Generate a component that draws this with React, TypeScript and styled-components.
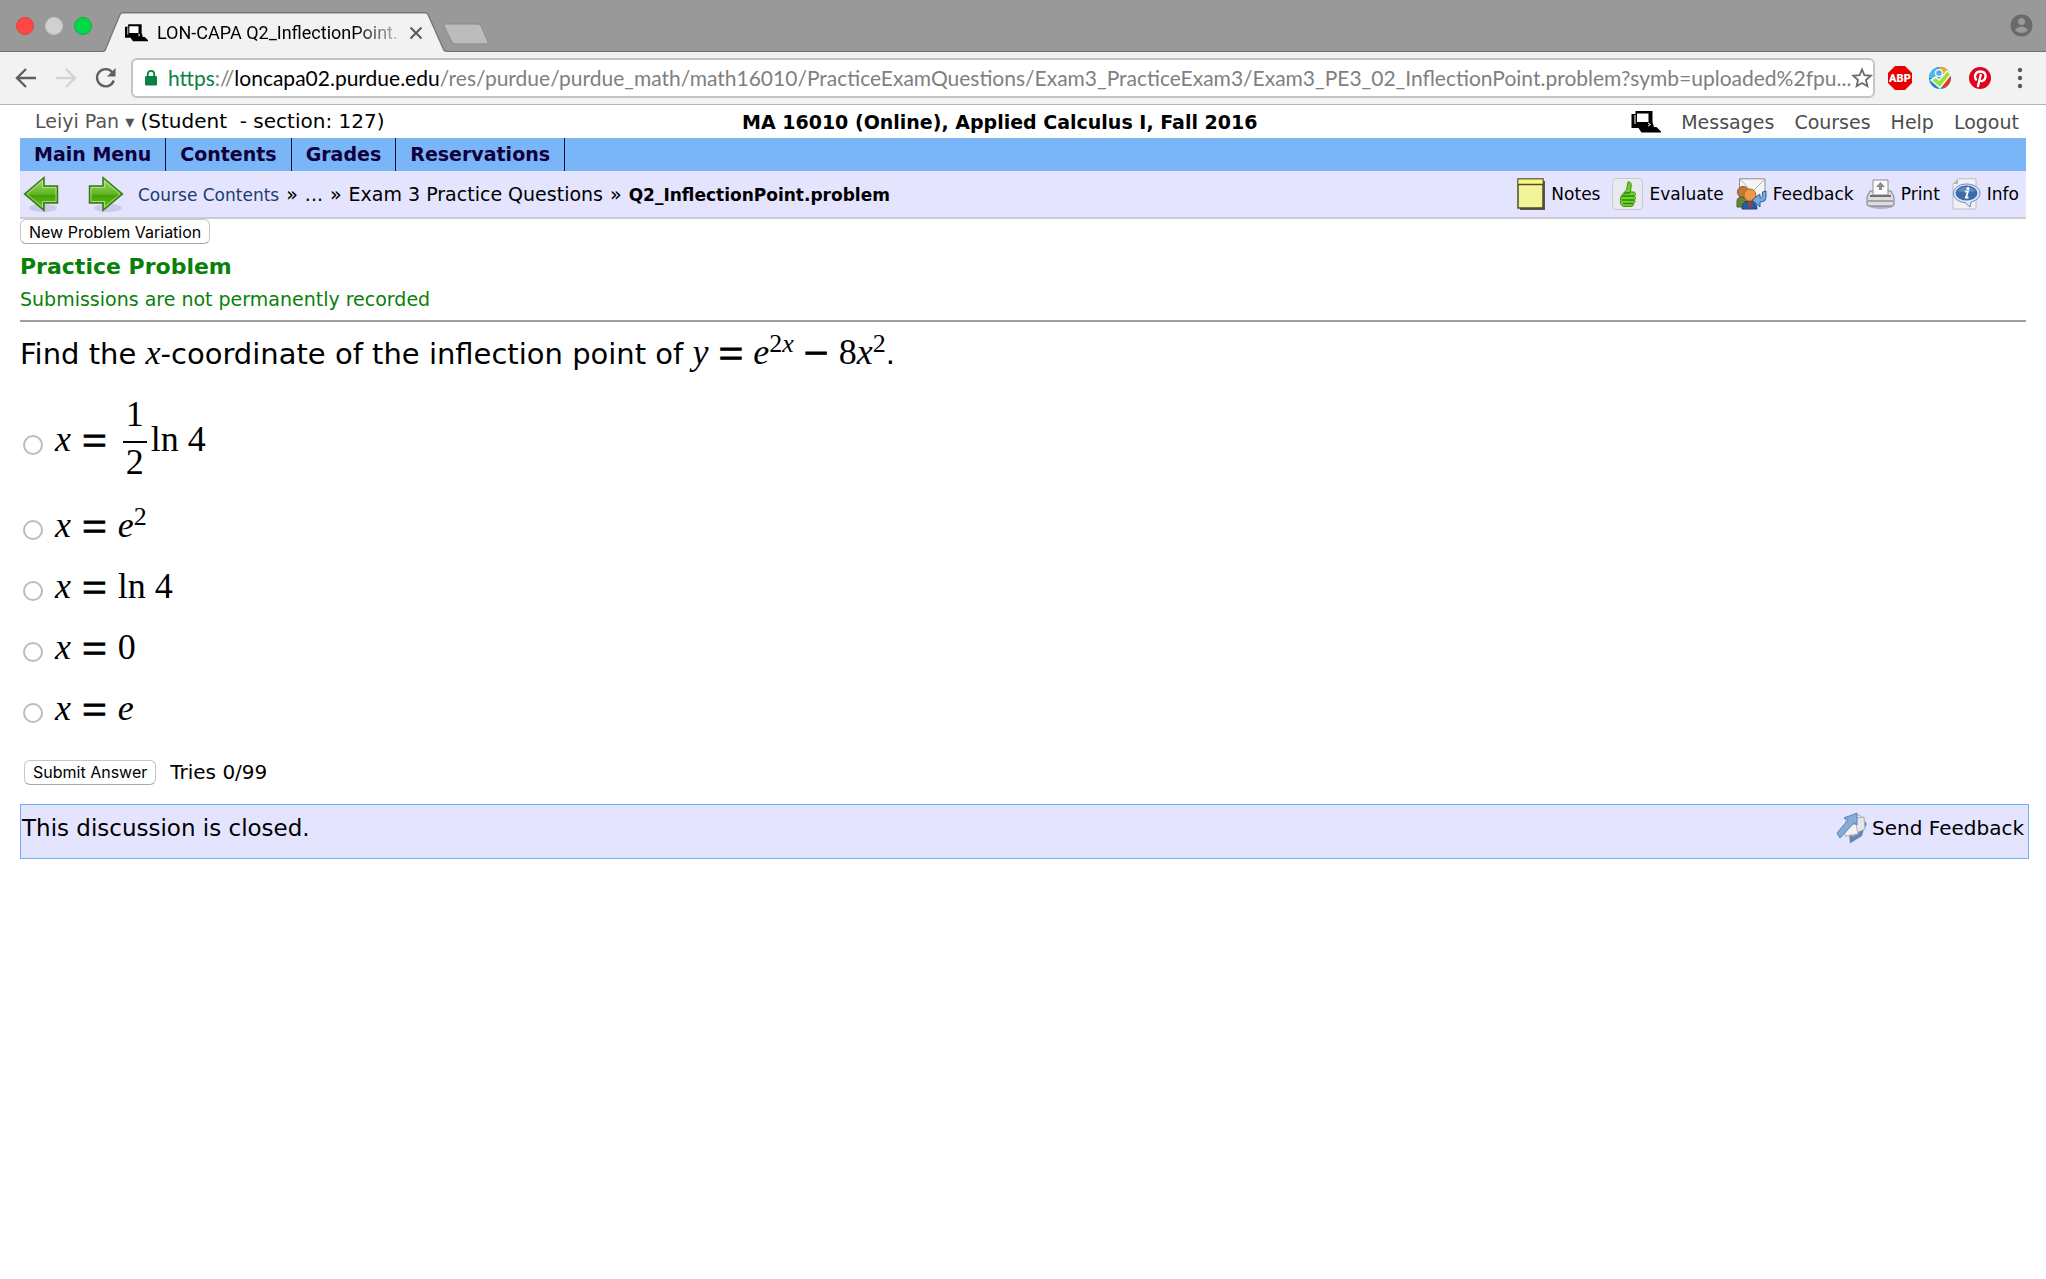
import React, { useState } from "react";
import styled, { createGlobalStyle } from "styled-components";

const GlobalStyle = createGlobalStyle`
  *, *::before, *::after { box-sizing: border-box; }
  body {
    margin: 0;
    background: #fff;
    color: #000;
    font-family: "DejaVu Sans", Verdana, sans-serif;
    font-size: 19px;
  }
  button { font: inherit; color: inherit; cursor: pointer; }
  svg { display: block; flex: none; }
`;

const uiFont = `Inter, Roboto, sans-serif`;

/* ---------- browser window ---------- */

const TabStrip = styled.div`
  display: flex;
  align-items: flex-end;
  height: 52px;
  padding: 0 13px 0 16px;
  background: #999;
  border-bottom: 1px solid #6f6f6f;
`;

const WindowButtons = styled.div`
  display: flex;
  align-self: center;
  gap: 11px;
  margin-right: 11px;
`;

const WindowButton = styled.button<{ $fill: string; $edge: string }>`
  width: 18px;
  height: 18px;
  padding: 0;
  border: 1px solid ${(p) => p.$edge};
  border-radius: 50%;
  background: ${(p) => p.$fill};
`;

const Tab = styled.div`
  position: relative;
  display: flex;
  align-items: center;
  width: 344px;
  height: 40px;
  margin-bottom: -1px;
  padding: 2px 24px 0 22px;
`;

const TabShape = styled.svg`
  position: absolute;
  inset: 0;
`;

const TabTitle = styled.span`
  position: relative;
  flex: 1;
  margin-left: 9px;
  font-family: Roboto, sans-serif;
  font-size: 18px;
  line-height: 24px;
  white-space: nowrap;
  mask-image: linear-gradient(90deg, #000 78%, transparent 100%);
`;

const Favicon = styled.span`
  position: relative;
`;

const BareButton = styled.button`
  position: relative;
  display: flex;
  align-items: center;
  justify-content: center;
  padding: 0;
  border: 0;
  background: none;
`;

const NewTabButton = styled(BareButton)`
  margin: 0 auto 6px -4px;
`;

const ProfileButton = styled(BareButton)`
  align-self: center;
`;

const Toolbar = styled.div`
  display: flex;
  align-items: center;
  height: 53px;
  padding: 0 14px 0 15px;
  background: #f2f2f2;
  border-bottom: 1px solid #b4b4b4;
`;

const NavButtons = styled.div`
  display: flex;
  gap: 18px;
  margin-right: 14px;
`;

const AddressBar = styled.div`
  display: flex;
  flex: 1;
  align-items: center;
  min-width: 0;
  height: 40px;
  padding: 0 8px 0 12px;
  border: 2px solid #c4c4c4;
  border-radius: 6px;
  background: #fff;
`;

const Address = styled.div`
  flex: 1;
  margin-left: 11px;
  color: #808080;
  font-family: Lato, sans-serif;
  font-size: 21px;
  line-height: 30px;
  white-space: nowrap;
`;

const Scheme = styled.span`
  color: #0b8043;
`;

const Host = styled.span`
  color: #000;
`;

const Extensions = styled.div`
  display: flex;
  align-items: center;
  gap: 16px;
  margin-left: 13px;
`;

/* ---------- page header ---------- */

const Page = styled.div`
  padding: 0 20px;
`;

const Header = styled.header`
  display: flex;
  align-items: center;
  height: 33px;
  padding: 0 7px 0 15px;
  line-height: 24px;
  white-space: nowrap;
`;

const UserInfo = styled.div`
  flex: 0 0 707px;
  font-size: 20px;
  white-space: pre;
`;

const UserMenu = styled.button`
  padding: 0;
  border: 0;
  background: none;
  color: #555;
  font-size: 19px;
`;

const Caret = styled.span`
  font-size: 18px;
`;

const CourseTitle = styled.strong`
  flex: 1;
`;

const HeaderLinks = styled.nav`
  display: flex;
  align-items: center;
  gap: 20px;
`;

const HeaderLink = styled.a`
  color: #4d4d4d;
  text-decoration: none;
`;

const MenuBar = styled.nav`
  display: flex;
  height: 33px;
  background: #79b5f7;
`;

const MenuLink = styled.a`
  padding: 0 14px;
  border-right: 1px solid #101030;
  color: #10003c;
  font-weight: 700;
  line-height: 32px;
  text-decoration: none;
`;

const LocationBar = styled.div`
  display: flex;
  align-items: center;
  justify-content: space-between;
  height: 48px;
  padding: 0 7px 0 3px;
  background: #e4e4ff;
  border-bottom: 2px solid #ccccd2;
  white-space: nowrap;
`;

const Row = styled.div<{ $gap: number }>`
  display: flex;
  align-items: center;
  gap: ${(p) => p.$gap}px;
`;

const Crumbs = styled.nav`
  display: flex;
  align-items: baseline;
  gap: 7px;
  line-height: 24px;
`;

const CrumbLink = styled.a<{ $small?: boolean }>`
  color: ${(p) => (p.$small ? "#1c3c6c" : "#000")};
  font-size: ${(p) => (p.$small ? 17 : 19)}px;
  text-decoration: none;
`;

const CurrentCrumb = styled.strong`
  font-size: 17px;
`;

const ToolLink = styled.a`
  display: flex;
  align-items: center;
  gap: 6px;
  color: #000;
  font-size: 17px;
  line-height: 24px;
  text-decoration: none;
`;

/* ---------- problem ---------- */

const PushButton = styled.button`
  height: 25px;
  padding: 0 8px;
  border: 1px solid #c6c6c6;
  border-bottom-color: #a8a8a8;
  border-radius: 6px;
  background: #fff;
  font-family: ${uiFont};
  font-size: 16px;
  line-height: 22px;
`;

const PracticeHeading = styled.h2`
  margin: 9px 0 0;
  color: #0a800a;
  font-size: 22px;
  line-height: 28px;
`;

const PracticeNote = styled.p`
  margin: 6px 0 0;
  color: #0a800a;
  line-height: 24px;
`;

const Rule = styled.hr`
  height: 2px;
  margin: 9px 0 0;
  border: 0;
  background: #a0a0a0;
`;

const Question = styled.p`
  margin: 8px 0 0;
  font-size: 29px;
  line-height: 48px;
`;

const MathText = styled.span`
  font-family: "Liberation Serif", "Times New Roman", serif;
  font-size: 36px;
  line-height: 1;
  white-space: nowrap;
`;

const Var = styled.i`
  font-family: "Liberation Serif", "Times New Roman", serif;
  font-size: 34px;
  line-height: 1;
`;

const Operator = styled.span`
  margin: 0 10px;
  font-size: 44px;
  line-height: 0;
  vertical-align: -4px;
  -webkit-text-stroke: 1px #000;
`;

const AnswerText = styled(MathText)<{ $tall?: boolean }>`
  padding-bottom: ${(p) => (p.$tall ? 4 : 10)}px;
  ${Operator} { margin: 0 11px; }
`;

const Sup = styled.sup`
  font-size: 26px;
  line-height: 0;
  vertical-align: 12px;
`;

const Fraction = styled.span`
  display: inline-flex;
  flex-direction: column;
  width: 24px;
  margin: 0 4px 0 5px;
  text-align: center;
  vertical-align: middle;
`;

const Numerator = styled.span`
  padding-bottom: 8px;
  border-bottom: 2px solid #000;
  line-height: 38px;
`;

const Denominator = styled.span`
  padding-bottom: 10px;
  line-height: 38px;
`;

const Options = styled.fieldset`
  margin: 13px 0 0;
  padding: 0;
  border: 0;
`;

const Option = styled.label<{ $tall?: boolean }>`
  display: flex;
  align-items: center;
  gap: 12px;
  height: ${(p) => (p.$tall ? 108 : 61)}px;
  padding-left: 3px;
`;

const Radio = styled.input`
  appearance: none;
  width: 20px;
  height: 20px;
  margin: 0;
  border: 2px solid #bcbcbc;
  border-radius: 50%;
  background: #fff;
  &:checked { background: radial-gradient(#333 0 4px, #fff 5px); }
`;

const SubmitRow = styled.div`
  display: flex;
  align-items: center;
  gap: 14px;
  padding: 15px 4px 18px;
  font-size: 20px;
  line-height: 28px;
`;

const Discussion = styled.section`
  display: flex;
  align-items: flex-start;
  justify-content: space-between;
  height: 55px;
  margin-right: -3px;
  padding: 7px 4px 0 1px;
  border: 1px solid #6fb0f4;
  background: #e4e4ff;
  font-size: 23px;
  line-height: 32px;
`;

const FeedbackLink = styled.a`
  display: flex;
  align-items: center;
  gap: 5px;
  color: #000;
  font-size: 20px;
  text-decoration: none;
`;

/* ---------- drawings ---------- */

const LonCapaLogo = ({ width, height }: { width: number; height: number }) => (
  <svg width={width} height={height} viewBox="0 0 29 22" aria-hidden="true">
    <path d="M0 3 H4 V0 H21 V11 L22.500 16 H25 L29.500 20.500 V21.500 H10 L7 17 H0 Z" fill="#000" />
    <path d="M5.500 2.500 H17 V11 H5.500 Z" fill="#fff" />
    <path d="M3.500 4 V13 M16.500 12 L19 13.500 L16.500 15.200" stroke="#fff" strokeWidth="1" fill="none" />
  </svg>
);

const NavArrow = ({ flip }: { flip?: boolean }) => (
  <svg width="36" height="38" viewBox="0 0 36 38" aria-hidden="true">
    <defs>
      <linearGradient id={flip ? "ag2" : "ag1"} x1="0" y1="0" x2="0" y2="1">
        <stop offset="0" stopColor="#a6dc6c" />
        <stop offset=".5" stopColor="#62b526" />
        <stop offset=".55" stopColor="#45a008" />
        <stop offset="1" stopColor="#6cc62c" />
      </linearGradient>
    </defs>
    <ellipse cx="20" cy="33" rx="14" ry="4" fill="#9a9ac0" opacity=".35" />
    <g transform={flip ? "translate(36 1) scale(-1 1)" : "translate(0 1)"}>
      <path d="M1.500 18 L21 1.500 V10 H34.500 V27 H21 V34.500 Z" fill={`url(#${flip ? "ag2" : "ag1"})`} stroke="#3c7a14" strokeWidth="1.500" />
      <path d="M4 18 L19.500 5 V11.500 H33 V25.500 H19.500 V31 Z" fill="none" stroke="#c4ecA0" strokeWidth="1" opacity=".7" />
    </g>
  </svg>
);

const NotesIcon = () => (
  <svg width="28" height="32" viewBox="0 0 28 32" aria-hidden="true">
    <path d="M3 3 H28 V32 H3 Z" fill="#555" />
    <path d="M1 1 H26 V30 H1 Z" fill="#f3f398" stroke="#4c4c30" strokeWidth="1.500" />
    <path d="M1.500 1.500 H25.500 V6 H1.500 Z" fill="#f8f87c" />
    <path d="M1 6.500 H26" stroke="#4c4c30" strokeWidth="1.500" />
  </svg>
);

const EvaluateIcon = () => (
  <svg width="31" height="32" viewBox="0 0 31 32" aria-hidden="true">
    <rect x=".5" y=".5" width="30" height="31" rx="4" fill="#e9e9ee" stroke="#c9c9d6" />
    <path d="M16 4 C19 3.500 19.500 6 19 9 L18.500 14 H21 C24 14 24 17 22.500 18 C24 20 23.500 21 22.500 22 C23.500 24 22.500 25 21.500 25.500 C22 28 20 28.500 17 28.500 H12 C9 28 8 25 8.500 21 C8.500 16 14.500 14 15 10 Z" fill="#6cd42a" stroke="#3c8c14" strokeWidth="1" />
    <path d="M12 15.500 L18 14.500 M10 18 H22 M10 22 H22 M11 25.500 H21" stroke="#2f8410" strokeWidth="1.300" />
  </svg>
);

const FeedbackIcon = () => (
  <svg width="31" height="32" viewBox="0 0 31 32" aria-hidden="true">
    <path d="M3.500 .8 H29 V23 H3.500 Z" fill="#f4f4f4" stroke="#8c8c8c" />
    <path d="M4 1 L16 14 L29 1" fill="none" stroke="#b4b4b4" />
    <circle cx="7" cy="14" r="5.500" fill="#c2783a" stroke="#8c5020" />
    <path d="M1 29 V23 Q1 19 7 19 L12 22 V29 Z" fill="#68803c" stroke="#4c6028" />
    <path d="M6 31 Q6 23 13 23 Q21 23 21 31 Z" fill="#2c5ca0" stroke="#1c4078" />
    <circle cx="14" cy="17" r="6" fill="#f09848" stroke="#bc6820" />
    <path d="M12 24 L14 31 L16 24 Z" fill="#d83020" />
    <path d="M30 13 V18 Q30 24 24 24 V29 L16 22 L24 16 V20 Q27 20 26.500 14 Z" fill="#78a8dc" stroke="#2c5c9c" />
  </svg>
);

const PrintIcon = () => (
  <svg width="29" height="30" viewBox="0 0 29 30" aria-hidden="true">
    <ellipse cx="15" cy="27" rx="12" ry="3" fill="#9090a8" opacity=".6" />
    <path d="M4 12 H25 L28 18 V25 Q28 27 26 27 H3 Q1 27 1 25 V18 Z" fill="#dcdcdc" stroke="#7c7c7c" />
    <path d="M7 1 H22 V16 H7 Z" fill="#fafafa" stroke="#8c8c8c" />
    <path d="M14.500 3 L19 8 H16 V11 H13 V8 H10 Z" fill="#8c8c8c" />
    <path d="M4 17 H25" stroke="#707070" strokeWidth="2" />
    <path d="M2 22 H27" stroke="#a4a4a4" strokeWidth="2" />
  </svg>
);

const InfoIcon = () => (
  <svg width="29" height="32" viewBox="0 0 29 32" aria-hidden="true">
    <path d="M6 .7 H24 V31 H1 V6 Z" fill="#f1f1f4" stroke="#bcbcc8" />
    <path d="M1 6 H6 V.7 Z" fill="#b8b8b8" />
    <path d="M14.500 6 C22 6 28 10 28 15.500 C28 20 23 23 19 24 L18 29 L13 24.500 C6 24 1.500 20 1.500 15.500 C1.500 10 7 6 14.500 6 Z" fill="#dce8f8" stroke="#6888b8" />
    <ellipse cx="14.500" cy="15" rx="11" ry="7.500" fill="#3c6cac" />
    <path d="M5 13 Q14 5 24 13 Q14 15 5 13 Z" fill="#7ca0d0" opacity=".6" />
    <circle cx="16" cy="10.500" r="1.500" fill="#fff" />
    <path d="M13 13.500 H16 L14 19.500 H16.500" fill="none" stroke="#fff" strokeWidth="1.800" />
  </svg>
);

const SendIcon = () => (
  <svg width="31" height="32" viewBox="0 0 31 32" aria-hidden="true">
    <path d="M9 5 L24 3 L28 13 L12 20 Z" fill="#eeeeee" stroke="#b0b4bc" />
    <path d="M28 8 L31 12 L28 17 L26 24 L14 31.500 L13 22 L18 24 Z" fill="#6488b4" />
    <path d="M19 6 L28 5 L29 17 L20 21 Z" fill="#e6e6e8" stroke="#a8acb4" />
    <path d="M9 14 L20 12 L22 22 L9 24 Z" fill="#f2f2f2" stroke="#b4b4b8" />
    <path d="M21 1 L21 13 L18 11 L4 26 L1 21 L12 8 L8 6 Z" fill="#84acd8" stroke="#5c84b4" />
  </svg>
);

const StarIcon = () => (
  <svg width="22" height="22" viewBox="0 0 22 22" aria-hidden="true">
    <path d="M11 2.500 L13.400 8.200 L19.800 8.800 L15 13 L16.400 19.200 L11 16 L5.600 19.200 L7 13 L2.200 8.800 L8.600 8.200 Z" fill="none" stroke="#6a6a6a" strokeWidth="1.800" />
  </svg>
);

const AbpIcon = () => (
  <svg width="24" height="24" viewBox="0 0 24 24" role="img" aria-label="Adblock Plus">
    <path d="M7 0 H17 L24 7 V17 L17 24 H7 L0 17 V7 Z" fill="#e60000" />
    <text x="12" y="16" textAnchor="middle" fontFamily="Roboto, sans-serif" fontSize="11" fontWeight="900" fill="#fff">ABP</text>
  </svg>
);

const MapIcon = () => (
  <svg width="24" height="24" viewBox="0 0 24 24" aria-hidden="true">
    <circle cx="12" cy="12" r="11" fill="#1880e0" />
    <path d="M1 12 A11 11 0 0 1 9 1.500 L8 12 Z" fill="#48b8f0" />
    <path d="M12 1 A11 11 0 0 1 21 6 L18 9 L10 4 Z" fill="#f8a818" />
    <path d="M20 5 A11 11 0 0 1 18 21 L14 22 L19 8 Z" fill="#f03810" />
    <circle cx="11" cy="7" r="3.500" fill="#58a8f0" stroke="#f0f8ff" strokeWidth="1.500" />
    <path d="M3 14 L8 11 L11 14 L19 5 L23 8 L12 22 Z" fill="#98e048" stroke="#f4ffe4" strokeWidth="1.500" />
  </svg>
);

const PinterestIcon = () => (
  <svg width="24" height="24" viewBox="0 0 24 24" aria-hidden="true">
    <circle cx="12" cy="12" r="11" fill="#e00020" />
    <path d="M8 13.500 C5.500 10 8 5.500 12.500 5.500 C17 5.500 18.500 9 17 12.500 C15.800 15.500 12.500 15.800 11.500 14 M12.700 9 L10 20" fill="none" stroke="#fff" strokeWidth="2.400" strokeLinecap="round" />
  </svg>
);

const MoreIcon = () => (
  <svg width="24" height="24" viewBox="0 0 24 24" aria-hidden="true">
    <circle cx="12" cy="4" r="2.200" fill="#5a5a5a" />
    <circle cx="12" cy="12" r="2.200" fill="#5a5a5a" />
    <circle cx="12" cy="20" r="2.200" fill="#5a5a5a" />
  </svg>
);

const LineArrow = ({ forward }: { forward?: boolean }) => (
  <svg width="22" height="22" viewBox="0 0 22 22" aria-hidden="true">
    <path
      d={forward ? "M1 11 H20 M11 2 L20 11 L11 20" : "M21 11 H2 M11 2 L2 11 L11 20"}
      fill="none"
      stroke={forward ? "#d4d4d4" : "#5f5f5f"}
      strokeWidth="2.400"
    />
  </svg>
);

const ReloadIcon = () => (
  <svg width="22" height="22" viewBox="0 0 22 22" aria-hidden="true">
    <path d="M18.800 13.500 A8.600 8.600 0 1 1 17.500 5.500" fill="none" stroke="#5f5f5f" strokeWidth="2.400" />
    <path d="M20.500 1 V9.500 H12 Z" fill="#5f5f5f" />
  </svg>
);

const LockIcon = () => (
  <svg width="12" height="18" viewBox="0 0 12 18" aria-hidden="true">
    <path d="M2.800 8 V5 A3.200 3.200 0 0 1 9.200 5 V8" fill="none" stroke="#0b8043" strokeWidth="1.800" />
    <rect x="0" y="7" width="12" height="9.500" rx="1" fill="#0b8043" />
  </svg>
);

/* ---------- data ---------- */

const Equals = () => <Operator>=</Operator>;

const answers: { id: string; tall?: boolean; value: React.ReactNode }[] = [
  {
    id: "half-ln-4",
    tall: true,
    value: (
      <>
        <Fraction>
          <Numerator>1</Numerator>
          <Denominator>2</Denominator>
        </Fraction>
        ln 4
      </>
    ),
  },
  { id: "e-squared", value: <><i>e</i><Sup>2</Sup></> },
  { id: "ln-4", value: "ln 4" },
  { id: "zero", value: "0" },
  { id: "e", value: <i>e</i> },
];

const tools = [
  { name: "Notes", icon: <NotesIcon /> },
  { name: "Evaluate", icon: <EvaluateIcon /> },
  { name: "Feedback", icon: <FeedbackIcon /> },
  { name: "Print", icon: <PrintIcon /> },
  { name: "Info", icon: <InfoIcon /> },
];

/* ---------- app ---------- */

const BrowserChrome = () => (
  <>
    <TabStrip>
      <WindowButtons>
        <WindowButton aria-label="Close window" $fill="#ff4844" $edge="#e0403c" />
        <WindowButton aria-label="Minimize window" $fill="#d0d0d0" $edge="#c4c4c4" />
        <WindowButton aria-label="Zoom window" $fill="#00d848" $edge="#10b040" />
      </WindowButtons>
      <Tab>
        <TabShape width="344" height="40" viewBox="0 0 344 40" aria-hidden="true">
          <path d="M0 40 L2 38.500 L17 2.500 Q18 .7 20 .7 H322 Q324 .7 325 2.500 L341 38.500 L344 40 Z" fill="#f2f2f2" />
          <path d="M0 39.500 L2 38.500 L17 2.500 Q18 .7 20 .7 H322 Q324 .7 325 2.500 L341 38.500 L344 39.500" fill="none" stroke="#777" strokeWidth="1.400" />
        </TabShape>
        <Favicon><LonCapaLogo width={23} height={18} /></Favicon>
        <TabTitle>LON-CAPA Q2_InflectionPoint.</TabTitle>
        <BareButton aria-label="Close tab">
          <svg width="14" height="14" viewBox="0 0 14 14" aria-hidden="true">
            <path d="M1.500 1.500 L12.500 12.500 M12.500 1.500 L1.500 12.500" stroke="#5a5a5a" strokeWidth="2" />
          </svg>
        </BareButton>
      </Tab>
      <NewTabButton aria-label="New tab">
        <svg width="46" height="22" viewBox="0 0 46 22" aria-hidden="true">
          <path d="M2 1 H35 Q37 1 38 3 L45 19 Q45.500 21 44 21 H12 Q10 21 9 19 L1 3 Q.5 1 2 1 Z" fill="#bcbcbc" stroke="#8a8a8a" />
        </svg>
      </NewTabButton>
      <ProfileButton aria-label="Profile">
        <svg width="23" height="23" viewBox="0 0 23 23" aria-hidden="true">
          <circle cx="11.500" cy="11.500" r="11" fill="#6a6a6a" />
          <circle cx="11.500" cy="7.500" r="3.500" fill="#999" />
          <path d="M5 16 Q8 12.500 11.500 12.500 Q15 12.500 18 16 Q15.500 19 11.500 19 Q7.500 19 5 16 Z" fill="#999" />
        </svg>
      </ProfileButton>
    </TabStrip>
    <Toolbar>
      <NavButtons>
        <BareButton aria-label="Back"><LineArrow /></BareButton>
        <BareButton aria-label="Forward"><LineArrow forward /></BareButton>
        <BareButton aria-label="Reload"><ReloadIcon /></BareButton>
      </NavButtons>
      <AddressBar>
        <LockIcon />
        <Address role="textbox" aria-label="Address" tabIndex={0}>
          <Scheme>https</Scheme>://<Host>loncapa02.purdue.edu</Host>
          /res/purdue/purdue_math/math16010/PracticeExamQuestions/Exam3_PracticeExam3/Exam3_PE3_02_InflectionPoint.problem?symb=uploaded%2fpu...
        </Address>
        <BareButton aria-label="Bookmark this page"><StarIcon /></BareButton>
      </AddressBar>
      <Extensions>
        <BareButton aria-label="Adblock Plus"><AbpIcon /></BareButton>
        <BareButton aria-label="Site rating"><MapIcon /></BareButton>
        <BareButton aria-label="Pinterest"><PinterestIcon /></BareButton>
        <BareButton aria-label="Menu"><MoreIcon /></BareButton>
      </Extensions>
    </Toolbar>
  </>
);

export default function App() {
  const [answer, setAnswer] = useState("");

  return (
    <>
      <GlobalStyle />
      <BrowserChrome />
      <Page>
        <Header>
          <UserInfo>
            <UserMenu>Leiyi Pan <Caret>▾</Caret></UserMenu>
            {" (Student  - section: 127)"}
          </UserInfo>
          <CourseTitle>MA 16010 (Online), Applied Calculus I, Fall 2016</CourseTitle>
          <HeaderLinks>
            <LonCapaLogo width={30} height={22} />
            {["Messages", "Courses", "Help", "Logout"].map((name) => (
              <HeaderLink key={name} href="#">{name}</HeaderLink>
            ))}
          </HeaderLinks>
        </Header>
        <MenuBar>
          {["Main Menu", "Contents", "Grades", "Reservations"].map((name) => (
            <MenuLink key={name} href="#">{name}</MenuLink>
          ))}
        </MenuBar>
        <LocationBar>
          <Row $gap={14}>
            <Row $gap={29}>
              <BareButton aria-label="Previous"><NavArrow /></BareButton>
              <BareButton aria-label="Next"><NavArrow flip /></BareButton>
            </Row>
            <Crumbs>
              <CrumbLink href="#" $small>Course Contents</CrumbLink>
              <span>»</span>
              <span>...</span>
              <span>»</span>
              <CrumbLink href="#">Exam 3 Practice Questions</CrumbLink>
              <span>»</span>
              <CurrentCrumb>Q2_InflectionPoint.problem</CurrentCrumb>
            </Crumbs>
          </Row>
          <Row $gap={12}>
            {tools.map((tool) => (
              <ToolLink key={tool.name} href="#">{tool.icon}{tool.name}</ToolLink>
            ))}
          </Row>
        </LocationBar>

        <main>
          <PushButton>New Problem Variation</PushButton>
          <PracticeHeading>Practice Problem</PracticeHeading>
          <PracticeNote>Submissions are not permanently recorded</PracticeNote>
          <Rule />
          <Question>
            Find the <Var>x</Var>-coordinate of the inflection point of{" "}
            <MathText>
              <i>y</i><Equals /><i>e</i><Sup>2<i>x</i></Sup>
              <Operator>−</Operator>8<i>x</i><Sup>2</Sup>
            </MathText>.
          </Question>
          <Options aria-label="Answer">
            {answers.map(({ id, tall, value }) => (
              <Option key={id} $tall={tall}>
                <Radio
                  type="radio"
                  name="answer"
                  value={id}
                  checked={answer === id}
                  onChange={() => setAnswer(id)}
                />
                <AnswerText $tall={tall}><i>x</i><Equals />{value}</AnswerText>
              </Option>
            ))}
          </Options>
          <SubmitRow>
            <PushButton>Submit Answer</PushButton>
            <span>Tries 0/99</span>
          </SubmitRow>
          <Discussion>
            <span>This discussion is closed.</span>
            <FeedbackLink href="#"><SendIcon />Send Feedback</FeedbackLink>
          </Discussion>
        </main>
      </Page>
    </>
  );
}
